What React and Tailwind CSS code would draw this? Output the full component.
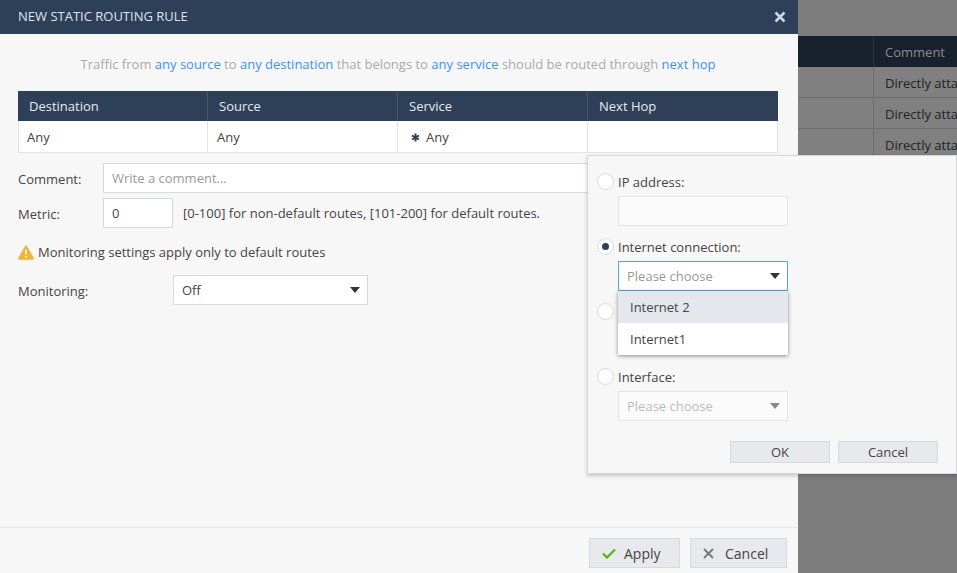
import React from 'react';

const font = { fontFamily: '"Open Sans", sans-serif' };

function Caret({ className = 'border-t-[#333]' }) {
  return <span className={`h-0 w-0 border-x-[5px] border-t-[6px] border-x-transparent ${className}`} />;
}

function Radio({ checked }) {
  return (
    <span className="flex h-[17px] w-[17px] shrink-0 items-center justify-center rounded-full border border-[#d5d9e0] bg-white">
      {checked && <span className="h-[7px] w-[7px] rounded-full bg-[#2e3f58]" />}
    </span>
  );
}

function HopOption({ checked, label, children }) {
  return (
    <div className="h-[65px]">
      <div className="flex h-[17px] items-center gap-1">
        <Radio checked={checked} />
        <span className="pt-[2px] text-[13px] leading-[17px] text-[#444]">{label}</span>
      </div>
      <div className="mt-[6px] ml-[21px] w-[170px]">{children}</div>
    </div>
  );
}

const columns = ['Destination', 'Source', 'Service', 'Next Hop'];

export default function App() {
  return (
    <div className="relative flex h-[573px] w-[957px] overflow-hidden bg-[#7c7c7c] text-[13px] text-[#444]" style={font}>
      <div className="flex w-[798px] shrink-0 flex-col bg-[#f7f7f7]">
        <div className="flex h-[34px] shrink-0 items-center justify-between bg-[#2e3f58] pr-[12px] pl-[18px]">
          <span className="text-[13px] text-[#dfe4ec]">NEW STATIC ROUTING RULE</span>
          <svg width="12" height="12" viewBox="0 0 12 12" fill="none" stroke="#cfd6e2" strokeWidth="2.6">
            <path d="M1.5 1.5l9 9M10.5 1.5l-9 9" />
          </svg>
        </div>

        <p className="mt-[20px] h-[20px] pr-[2px] text-center text-[13px] leading-[20px] text-[#aaa]">
          Traffic from <span className="text-[#3d92f5]">any source</span> to <span className="text-[#3d92f5]">any destination</span> that belongs to <span className="text-[#3d92f5]">any service</span> should be routed through <span className="text-[#3d92f5]">next hop</span>
        </p>

        <div className="mt-[17px] ml-[18px] w-[760px]">
          <div className="grid h-[30px] grid-cols-[189px_190px_190px_191px] bg-[#2e3f58] text-[#e8ebf0]">
            {columns.map((c, i) => (
              <div key={c} className={`flex items-center pt-[1px] pl-[11px] ${i > 0 ? 'border-l border-[#46566e]' : ''}`}>
                {c}
              </div>
            ))}
          </div>
          <div className="grid h-[32px] grid-cols-[188px_190px_190px_190px] border-x border-b border-[#e1e4ea] bg-white text-[#444]">
            <div className="flex items-center pt-[2px] pl-[8px]">Any</div>
            <div className="flex items-center border-l border-[#e1e4ea] pt-[2px] pl-[9px]">Any</div>
            <div className="flex items-center gap-[6px] border-l border-[#e1e4ea] pt-[2px] pl-[13px]">
              <svg width="9" height="9" viewBox="0 0 9 9" stroke="#2e3f58" strokeWidth="2">
                <path d="M4.5 0.5v8M1 2.5l7 4M8 2.5l-7 4" />
              </svg>
              Any
            </div>
            <div className="border-l border-[#e1e4ea]" />
          </div>
        </div>

        <div className="mt-[10px] ml-[18px] flex h-[30px] items-center">
          <span className="w-[85px] pt-[3px]">Comment:</span>
          <div className="flex h-[30px] w-[520px] items-center border border-[#d5d9e0] bg-white pt-[1px] pl-[8px] text-[#999]">
            Write a comment...
          </div>
        </div>

        <div className="mt-[5px] ml-[18px] flex h-[30px] items-center">
          <span className="w-[85px] pt-[3px]">Metric:</span>
          <div className="flex h-[30px] w-[70px] items-center border border-[#d5d9e0] bg-white pt-[1px] pl-[8px]">0</div>
          <span className="ml-[10px] pt-[2px]">[0-100] for non-default routes, [101-200] for default routes.</span>
        </div>

        <div className="mt-[14px] ml-[18px] flex h-[20px] items-center gap-[4px]">
          <svg width="16" height="15" viewBox="0 0 16 15">
            <path d="M8 0.5c.5 0 .9.3 1.1.7l6.6 11.6c.5.9-.1 1.9-1.1 1.9H1.4c-1 0-1.6-1-1.1-1.9L6.9 1.2C7.1.8 7.5.5 8 .5z" fill="#f5b333" />
            <path d="M8 4.5v5M8 11v1.6" stroke="#fff" strokeWidth="1.7" />
          </svg>
          <span className="pt-[2px]">Monitoring settings apply only to default routes</span>
        </div>

        <div className="mt-[13px] ml-[18px] flex h-[30px] items-center">
          <span className="w-[155px] pt-[3px]">Monitoring:</span>
          <div className="flex h-[30px] w-[195px] items-center justify-between border border-[#d5d9e0] bg-white pr-[7px] pl-[8px]">
            <span className="pt-[1px]">Off</span>
            <Caret />
          </div>
        </div>

        <div className="mt-auto flex h-[46px] shrink-0 justify-end gap-[10px] border-t border-[#e4e6ea] pt-[10px] pr-[11px]">
          <button className="flex h-[30px] w-[91px] items-center gap-[8px] border border-[#d5d9e0] bg-[#e8e9ec] pl-[12px] text-[14px] text-[#444]">
            <svg width="14" height="11" viewBox="0 0 14 11" fill="none" stroke="#5cb714" strokeWidth="2.4">
              <path d="M1 5.5l4 4 8-8" />
            </svg>
            Apply
          </button>
          <button className="flex h-[30px] w-[97px] items-center gap-[11px] border border-[#d5d9e0] bg-[#e8e9ec] pl-[12px] text-[14px] text-[#444]">
            <svg width="11" height="11" viewBox="0 0 11 11" fill="none" stroke="#777" strokeWidth="1.8">
              <path d="M1 1l9 9M10 1l-9 9" />
            </svg>
            Cancel
          </button>
        </div>
      </div>

      {/* table behind the dimmed backdrop */}
      <div className="flex-1 pt-[36px] text-[13px]">
        <div className="grid h-[31px] grid-cols-[76px_1fr] bg-[#19202e] text-[#8c8c8c]">
          <div className="border-r border-[#2a3342]" />
          <div className="flex items-center pt-[2px] pl-[11px]">Comment</div>
        </div>
        {[0, 1, 2].map((i) => (
          <div key={i} className="grid h-[31px] grid-cols-[76px_1fr] overflow-hidden border-b border-[#6d6d6d] bg-[#808080] text-[#222]">
            <div className="border-r border-[#6d6d6d]" />
            <div className="flex items-center pt-[3px] pl-[11px] whitespace-nowrap">Directly attached</div>
          </div>
        ))}
      </div>

      {/* next hop popover */}
      <div className="absolute top-[155px] left-[587px] h-[319px] w-[370px] border border-[#d5d7da] bg-[#f7f7f7] pt-[17px] pl-[9px] shadow-[0_2px_4px_rgba(0,0,0,0.2)]">
        <HopOption label="IP address:">
          <div className="h-[30px] border border-[#e2e4e8] bg-[#fbfbfb]" />
        </HopOption>
        <HopOption checked label="Internet connection:">
          <div className="flex h-[30px] items-center justify-between border border-[#4fa9e6] bg-white pr-[7px] pl-[8px] text-[#999]">
            <span className="pt-[1px]">Please choose</span>
            <Caret />
          </div>
        </HopOption>
        <HopOption label="" />
        <HopOption label="Interface:">
          <div className="flex h-[30px] items-center justify-between border border-[#e2e4e8] bg-[#fbfbfb] pr-[7px] pl-[8px] text-[#bbb]">
            <span className="pt-[1px]">Please choose</span>
            <Caret className="border-t-[#888]" />
          </div>
        </HopOption>
        <div className="mt-[8px] flex justify-end gap-[8px] pr-[18px]">
          <button className="h-[22px] w-[100px] border border-[#d5d9e0] bg-[#e8e9ec] pt-[1px] text-[13px] text-[#444]">OK</button>
          <button className="h-[22px] w-[100px] border border-[#d5d9e0] bg-[#e8e9ec] pt-[1px] text-[13px] text-[#444]">Cancel</button>
        </div>
      </div>

      {/* open dropdown */}
      <div className="absolute top-[291px] left-[618px] w-[170px] bg-white text-[13px] shadow-[0_1px_4px_rgba(0,0,0,0.45)]">
        <div className="flex h-[32px] items-center bg-[#e4e7eb] pt-[1px] pl-[12px]">Internet 2</div>
        <div className="flex h-[32px] items-center pt-[1px] pl-[12px]">Internet1</div>
      </div>
    </div>
  );
}
